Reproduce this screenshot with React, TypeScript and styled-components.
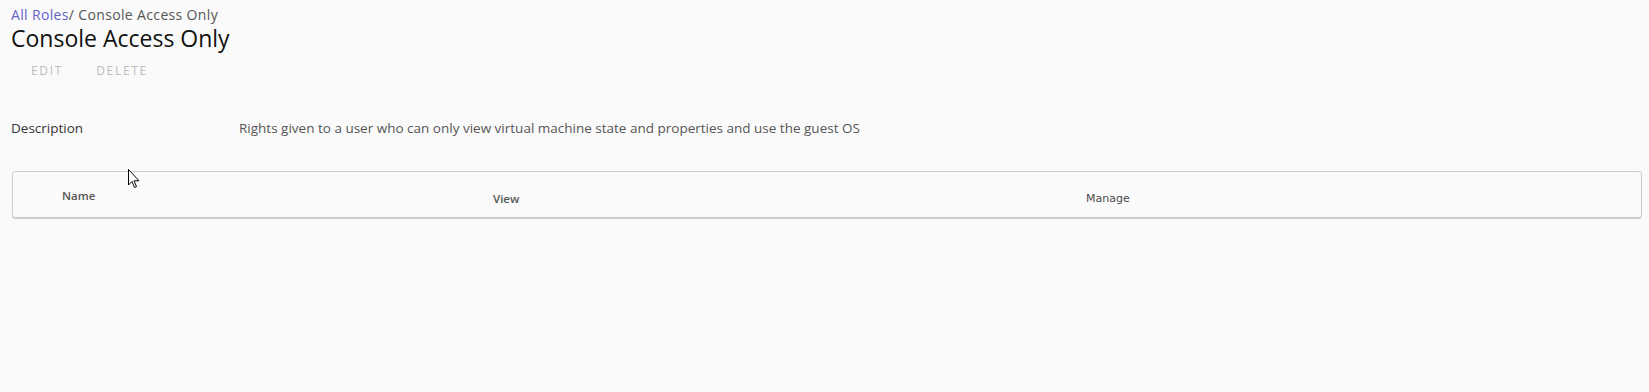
import React from 'react';
import styled, {createGlobalStyle} from 'styled-components';

const GlobalStyle = createGlobalStyle`
  html, body {
    margin: 0;
    padding: 0;
    background: #fafafa;
    font-family: "Open Sans", "Noto Sans", sans-serif;
  }
`;

const Page = styled.div`
  position: relative;
  padding: 6px 7px 0 11px;
  height: 386px;
`;

const Breadcrumb = styled.div`
  font-size: 14px;
  letter-spacing: 0.35px;
  line-height: 18px;
  color: #565656;
`;

const CrumbLink = styled.a`
  color: #6363c9;
  text-decoration: none;
`;

const Title = styled.h1`
  margin: 0;
  font-size: 23px;
  font-weight: 400;
  line-height: 29px;
  color: #111;
`;

const Actions = styled.div`
  display: flex;
  gap: 33px;
  padding: 10px 0 0 20px;
`;

const ActionButton = styled.button`
  border: 0;
  background: none;
  padding: 0;
  font-family: inherit;
  font-size: 12px;
  letter-spacing: 1.7px;
  line-height: 16px;
  color: #bdbdbd;
  cursor: not-allowed;
`;

const DetailRow = styled.div`
  display: grid;
  grid-template-columns: 228px 1fr;
  margin-top: 40px;
  font-size: 13.5px;
  line-height: 18px;
`;

const DetailLabel = styled.div`
  color: #333;
`;

const DetailValue = styled.div`
  color: #565656;
`;

const Grid = styled.div`
  margin: 34px 0 0 1px;
  height: 47px;
  box-sizing: border-box;
  border: 1px solid #ccc;
  border-radius: 3px;
  box-shadow: 0 1px 0 #ccc;
  display: grid;
  grid-template-columns: 431px 593px 1fr;
  padding-left: 49px;
`;

const HeaderCell = styled.div<{ $offset: number; $plain?: boolean }>`
  padding-top: ${({$offset}) => $offset}px;
  font-size: ${({$plain}) => ($plain ? '11px' : '11.5px')};
  font-weight: ${({$plain}) => ($plain ? 400 : 600)};
  font-family: ${({$plain}) => ($plain ? '"DejaVu Sans", Verdana, sans-serif' : 'inherit')};
  color: ${({$plain}) => ($plain ? '#4a4a4a' : '#565656')};
  line-height: 14px;
`;

const Cursor = styled.svg`
  position: absolute;
  left: 128px;
  top: 169px;
  pointer-events: none;
`;

export default function App() {
    return (
        <>
            <GlobalStyle/>
            <Page>
                <Breadcrumb>
                    <CrumbLink href="#roles">All Roles</CrumbLink>/ Console Access Only
                </Breadcrumb>
                <Title>Console Access Only</Title>
                <Actions>
                    <ActionButton disabled>EDIT</ActionButton>
                    <ActionButton disabled>DELETE</ActionButton>
                </Actions>
                <DetailRow>
                    <DetailLabel>Description</DetailLabel>
                    <DetailValue>
                        Rights given to a user who can only view virtual machine state and properties and use the guest OS
                    </DetailValue>
                </DetailRow>
                <Grid>
                    <HeaderCell $offset={17}>Name</HeaderCell>
                    <HeaderCell $offset={20}>View</HeaderCell>
                    <HeaderCell $offset={20} $plain>Manage</HeaderCell>
                </Grid>
                <Cursor width="13" height="20" viewBox="0 0 13 20">
                    <path d="M0.5 0.5 L0.5 16 L4 12.5 L6.5 18.5 L8.5 17.6 L6 11.8 L11 11.8 Z"
                          fill="#fff" stroke="#000" strokeWidth="1"/>
                </Cursor>
            </Page>
        </>
    );
}
